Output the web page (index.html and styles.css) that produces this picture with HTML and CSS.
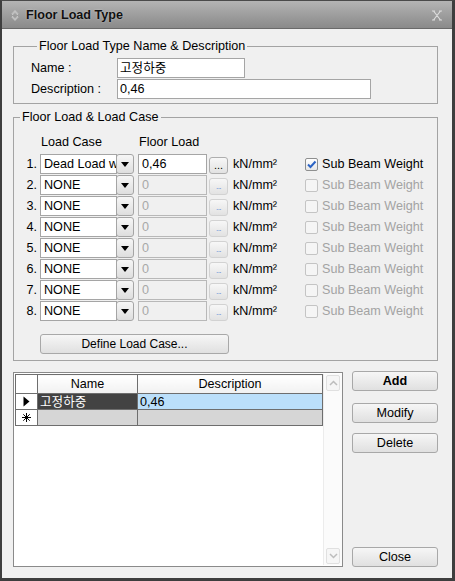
FILE: index.html
```html
<!DOCTYPE html>
<html>
<head>
<meta charset="utf-8">
<link rel="stylesheet" href="styles.css">
</head>
<body>
<div class="window">
  <div class="titlebar">
    <svg class="ticon" width="8" height="11" viewBox="0 0 8 11"><path d="M1 4.5 L4 1.5 L7 4.5 M1 6.5 L4 9.5 L7 6.5" fill="none" stroke="#e8e8e8" stroke-width="1.6"/><path d="M1 4.5 L4 1.5 L7 4.5 M1 6.5 L4 9.5 L7 6.5" fill="none" stroke="#6a6a6a" stroke-width="0.6"/></svg>
    <span class="title">Floor Load Type</span>
    <svg class="tclose" width="12" height="11" viewBox="0 0 12 11"><path d="M1 1 H4 M8 1 H11 M2.5 1 L9.5 10 M9.5 1 L2.5 10 M1 10 H4 M8 10 H11" fill="none" stroke="#dcdcdc" stroke-width="1.2"/></svg>
  </div>
  <div class="content">
    <fieldset class="group g1">
      <legend>Floor Load Type Name &amp; Description</legend>
      <div class="frow"><span class="flabel">Name :</span><div class="textbox tb-name">고정하중</div></div>
      <div class="frow"><span class="flabel">Description :</span><div class="textbox tb-desc">0,46</div></div>
    </fieldset>

    <fieldset class="group g2">
      <legend>Floor Load &amp; Load Case</legend>
      <div class="lc-head"><span class="h-case">Load Case</span><span>Floor Load</span></div>
      <div class="lc-rows">
        <div class="lc-row">
          <span class="num">1.</span>
          <div class="combo"><div class="cfield">Dead Load w</div><div class="cbtn"><i class="tri"></i></div></div>
          <div class="lbox">0,46</div>
          <div class="dots">...</div>
          <span class="unit">kN/mm²</span>
          <span class="check on"><svg width="11" height="11" viewBox="0 0 11 11"><path d="M2 5.5 L4.5 8 L9.5 2.5" fill="none" stroke="#2b63c4" stroke-width="2"/></svg></span>
          <span class="ctext">Sub Beam Weight</span>
        </div>
        <div class="lc-row off">
          <span class="num">2.</span>
          <div class="combo"><div class="cfield">NONE</div><div class="cbtn"><i class="tri"></i></div></div>
          <div class="lbox">0</div><div class="dots">...</div><span class="unit">kN/mm²</span>
          <span class="check"></span><span class="ctext">Sub Beam Weight</span>
        </div>
        <div class="lc-row off">
          <span class="num">3.</span>
          <div class="combo"><div class="cfield">NONE</div><div class="cbtn"><i class="tri"></i></div></div>
          <div class="lbox">0</div><div class="dots">...</div><span class="unit">kN/mm²</span>
          <span class="check"></span><span class="ctext">Sub Beam Weight</span>
        </div>
        <div class="lc-row off">
          <span class="num">4.</span>
          <div class="combo"><div class="cfield">NONE</div><div class="cbtn"><i class="tri"></i></div></div>
          <div class="lbox">0</div><div class="dots">...</div><span class="unit">kN/mm²</span>
          <span class="check"></span><span class="ctext">Sub Beam Weight</span>
        </div>
        <div class="lc-row off">
          <span class="num">5.</span>
          <div class="combo"><div class="cfield">NONE</div><div class="cbtn"><i class="tri"></i></div></div>
          <div class="lbox">0</div><div class="dots">...</div><span class="unit">kN/mm²</span>
          <span class="check"></span><span class="ctext">Sub Beam Weight</span>
        </div>
        <div class="lc-row off">
          <span class="num">6.</span>
          <div class="combo"><div class="cfield">NONE</div><div class="cbtn"><i class="tri"></i></div></div>
          <div class="lbox">0</div><div class="dots">...</div><span class="unit">kN/mm²</span>
          <span class="check"></span><span class="ctext">Sub Beam Weight</span>
        </div>
        <div class="lc-row off">
          <span class="num">7.</span>
          <div class="combo"><div class="cfield">NONE</div><div class="cbtn"><i class="tri"></i></div></div>
          <div class="lbox">0</div><div class="dots">...</div><span class="unit">kN/mm²</span>
          <span class="check"></span><span class="ctext">Sub Beam Weight</span>
        </div>
        <div class="lc-row off">
          <span class="num">8.</span>
          <div class="combo"><div class="cfield">NONE</div><div class="cbtn"><i class="tri"></i></div></div>
          <div class="lbox">0</div><div class="dots">...</div><span class="unit">kN/mm²</span>
          <span class="check"></span><span class="ctext">Sub Beam Weight</span>
        </div>
      </div>
      <div class="btn define">Define Load Case...</div>
    </fieldset>

    <div class="bottom">
      <div class="gridpanel">
        <div class="tablearea">
          <table class="grid">
            <tr class="hdr"><th class="rh"></th><th class="cname">Name</th><th class="cdesc">Description</th></tr>
            <tr class="r1"><td class="rh"><svg width="7" height="11" viewBox="0 0 7 11"><path d="M0.5 0.5 L6.5 5.5 L0.5 10.5 Z" fill="#000"/></svg></td><td class="sel">고정하중</td><td class="hl">0,46</td></tr>
            <tr class="rnew"><td class="rh"><svg width="9" height="9" viewBox="0 0 9 9"><path d="M4.5 0 V9 M0 4.5 H9 M1.3 1.3 L7.7 7.7 M7.7 1.3 L1.3 7.7" stroke="#000" stroke-width="1"/></svg></td><td></td><td></td></tr>
          </table>
        </div>
        <div class="vscroll">
          <div class="sbtn"><svg width="9" height="6" viewBox="0 0 9 6"><path d="M1 5 L4.5 1.5 L8 5" fill="none" stroke="#bdbdbd" stroke-width="1.5"/></svg></div>
          <div class="strack"></div>
          <div class="sbtn"><svg width="9" height="6" viewBox="0 0 9 6"><path d="M1 1 L4.5 4.5 L8 1" fill="none" stroke="#bdbdbd" stroke-width="1.5"/></svg></div>
        </div>
      </div>
      <div class="sidebtns">
        <div class="btn bold">Add</div>
        <div class="btn b-mod">Modify</div>
        <div class="btn b-del">Delete</div>
        <div class="btn b-close">Close</div>
      </div>
    </div>
  </div>
</div>
</body>
</html>
```

FILE: styles.css
```css
* { box-sizing: border-box; }
html, body { margin: 0; padding: 0; background: #f0f0f0; }
body {
  font-family: "Liberation Sans", Arial, "Noto Sans CJK KR", sans-serif;
  font-size: 12.6px;
  color: #000;
}
.window {
  width: 455px;
  height: 581px;
  background: #f0f0f0;
  border-top: 1px solid #4a4a4a;
  border-left: 2px solid #3e3e3e;
  border-right: 3px solid #3e3e3e;
  border-bottom: 3px solid #3e3e3e;
  display: flex;
  flex-direction: column;
}
.titlebar {
  height: 28px;
  flex: none;
  background: linear-gradient(#b4b4b4, #9a9a9a 60%, #8a8a8a);
  border-bottom: 1px solid #6a6a6a;
  display: flex;
  align-items: center;
  padding-left: 9px;
  padding-right: 9px;
}
.ticon { flex: none; margin-top: 1px; }
.title {
  margin-left: 7px;
  font-weight: bold;
  font-size: 12.6px;
  color: #111;
  text-shadow: 0 0 2px rgba(255,255,255,0.45);
}
.tclose { margin-left: auto; flex: none; margin-top: 1px; }

.content {
  flex: 1;
  padding: 0 14px 11px 11px;
  display: flex;
  flex-direction: column;
}

.group {
  margin: 0;
  padding: 0;
  border: 1px solid #a3a3a3;
  min-width: 0;
}
.group legend {
  margin-left: 6px;
  padding: 0 2px;
  line-height: 16px;
  height: 16px;
}
.g1 { margin-top: 9px; padding: 4px 0 4px 17px; }
.frow { display: flex; align-items: center; height: 20px; }
.frow + .frow { margin-top: 1px; }
.flabel { width: 86px; }
.textbox {
  height: 20px;
  background: #fff;
  border: 1px solid #a5a5a5;
  padding-left: 2px;
  line-height: 18px;
  font-family: "Liberation Sans", "Noto Sans CJK KR", sans-serif;
}
.tb-name { width: 128px; }
.tb-desc { width: 254px; }

.g2 { margin-top: 5px; padding: 10px 0 6px 0; }
.lc-head { display: flex; height: 15px; line-height: 15px; padding-left: 27px; margin-bottom: 4px; }
.h-case { width: 98px; }
.lc-rows { display: flex; flex-direction: column; gap: 1px; }
.lc-row { display: flex; align-items: center; height: 20px; }
.num { width: 24px; text-align: right; padding-right: 1px; }
.combo { display: flex; width: 94px; height: 20px; margin-left: 2px; }
.cfield {
  flex: 1;
  min-width: 0;
  background: #fff;
  border: 1px solid #a5a5a5;
  padding-left: 3px;
  line-height: 18px;
  white-space: nowrap;
  overflow: hidden;
}
.cbtn {
  width: 18px;
  margin-left: -1px;
  border: 1px solid #a5a5a5;
  border-radius: 3px;
  background: linear-gradient(#f6f6f6, #dedede);
  display: flex;
  align-items: center;
  justify-content: center;
}
.tri {
  width: 0; height: 0;
  border-left: 4px solid transparent;
  border-right: 4px solid transparent;
  border-top: 5px solid #000;
  margin-top: 1px;
}
.lbox {
  width: 69px;
  height: 20px;
  margin-left: 4px;
  background: #fff;
  border: 1px solid #a5a5a5;
  padding-left: 3px;
  line-height: 18px;
}
.dots {
  width: 19px;
  height: 17px;
  margin-left: 2px;
  margin-top: 2px;
  border: 1px solid #aeaeae;
  border-radius: 3px;
  background: linear-gradient(#f7f7f7, #e2e2e2);
  text-align: center;
  line-height: 14px;
  font-size: 11px;
}
.unit { width: 72px; margin-left: 5px; }
.check {
  width: 13px; height: 13px;
  border: 1px solid #8e8f8f;
  border-radius: 2px;
  background: linear-gradient(#ffffff, #e6e6e6);
  display: flex; align-items: center; justify-content: center;
}
.ctext { margin-left: 4px; }
.off .lbox { background: #f0f0f0; border-color: #b8b8b8; color: #a8a8a8; }
.off .dots { border-color: #d2d2d2; color: #4b7fd4; font-size: 8px; line-height: 16px; letter-spacing: -0.5px; }
.off .check { border-color: #c4c4c4; background: #f5f5f5; }
.off .ctext { color: #a3a3a3; }

.btn {
  height: 20px;
  border: 1px solid #a8a8a8;
  border-radius: 3px;
  background: linear-gradient(#f6f6f6, #e0e0e0);
  text-align: center;
  line-height: 18px;
}
.define { width: 189px; margin-left: 26px; margin-top: 13px; font-size: 12px; }

.bottom { display: flex; margin-top: 10px; height: 196px; }
.gridpanel {
  width: 330px;
  height: 195px;
  margin-top: 1px;
  background: #fff;
  border: 1px solid #8a8a8a;
  display: flex;
  padding: 1px 0 1px 1px;
}
.tablearea { width: 308px; }
.grid {
  border-collapse: collapse;
  width: 308px;
  table-layout: fixed;
}
.grid th, .grid td {
  border: 1px solid #6e6e6e;
  padding: 0 2px;
  font-weight: normal;
  white-space: nowrap;
  overflow: hidden;
}
.grid .rh { width: 22px; text-align: center; padding: 0; background: #fff; }
.grid .rh svg { display: block; margin: 0 auto; }
.grid .cname { width: 100px; }
.hdr th { height: 19px; background: linear-gradient(#ffffff, #f1f1f1); text-align: center; }
.r1 td { height: 16px; line-height: 14px; }
.r1 .sel { background: #434343; color: #fff; }
.r1 .hl { background: #bbdffa; }
.rnew td { height: 16px; background: #d6d6d6; }
.rnew .rh { background: #fff; }

.vscroll {
  width: 19px;
  margin-left: auto;
  background: #fbfbfb;
  border-left: 1px solid #ececec;
  display: flex;
  flex-direction: column;
  padding: 1px 2px;
}
.sbtn {
  height: 16px;
  border: 1px solid #e0e0e0;
  border-radius: 2px;
  background: #f6f6f6;
  display: flex; align-items: center; justify-content: center;
}
.strack { flex: 1; }

.sidebtns {
  width: 86px;
  margin-left: 9px;
  display: flex;
  flex-direction: column;
}
.bold { font-weight: bold; }
.b-mod { margin-top: 12px; }
.b-del { margin-top: 10px; }
.b-close { margin-top: auto; }
```
